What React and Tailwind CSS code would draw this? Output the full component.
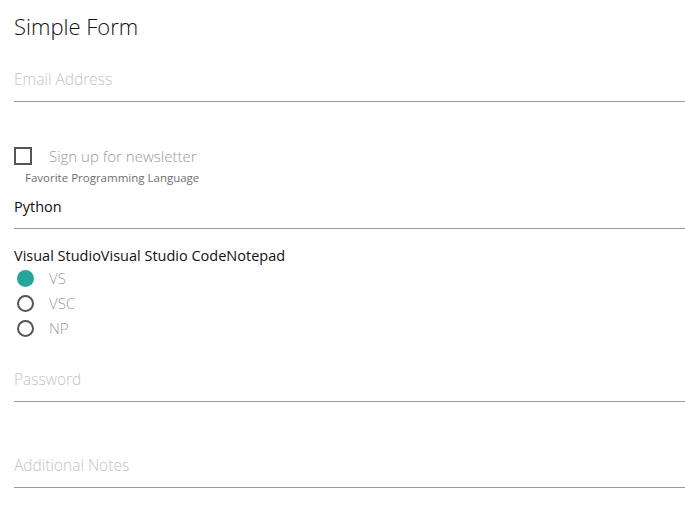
import React from 'react';

const font = { fontFamily: '"Open Sans", "Noto Sans", sans-serif' };

function Field({ placeholder, value, className }) {
  return (
    <div className={`flex h-[41px] items-center border-b border-[#9a9a9a] pb-[3px] ${className}`}>
      {value ? (
        <span className="text-[14.5px] text-[#111]">{value}</span>
      ) : (
        <span className="mt-[1px] text-[15.5px] font-light text-[#c4c4c4]">{placeholder}</span>
      )}
    </div>
  );
}

function Radio({ label, checked }) {
  return (
    <div className="flex h-[25px] items-center">
      {checked ? (
        <span className="ml-[3px] h-[17px] w-[17px] rounded-full bg-[#26a69a]" />
      ) : (
        <span className="ml-[3px] h-[17px] w-[17px] rounded-full border-2 border-[#555]" />
      )}
      <span className="ml-[15px] text-[15px] font-light text-[#9c9c9c]">{label}</span>
    </div>
  );
}

export default function App() {
  return (
    <div className="min-h-[515px] w-[685px] bg-white pl-[14px]" style={font}>
      <h1 className="pt-[9px] text-[22px] font-light leading-[34px] text-[#111]">Simple Form</h1>

      {/* Email */}
      <Field placeholder="Email Address" className="mt-[18px]" />

      {/* Newsletter */}
      <div className="mt-[45px] flex h-[18px] items-center">
        <span className="h-[18px] w-[18px] border-2 border-[#555]" />
        <span className="ml-[17px] text-[15px] font-light text-[#999]">Sign up for newsletter</span>
      </div>
      <div className="ml-[11px] mt-[6px] text-[11.5px] leading-[14px] text-[#6e6e6e]">
        Favorite Programming Language
      </div>
      <Field value="Python" className="mt-[3px]" />

      {/* Editor */}
      <div className="mt-[17px] text-[14.5px] leading-[20px] text-[#111]">
        Visual StudioVisual Studio CodeNotepad
      </div>
      <Radio label="VS" checked />
      <Radio label="VSC" />
      <Radio label="NP" />

      <Field placeholder="Password" className="mt-[20px]" />
      <Field placeholder="Additional Notes" className="mt-[45px]" />
    </div>
  );
}
